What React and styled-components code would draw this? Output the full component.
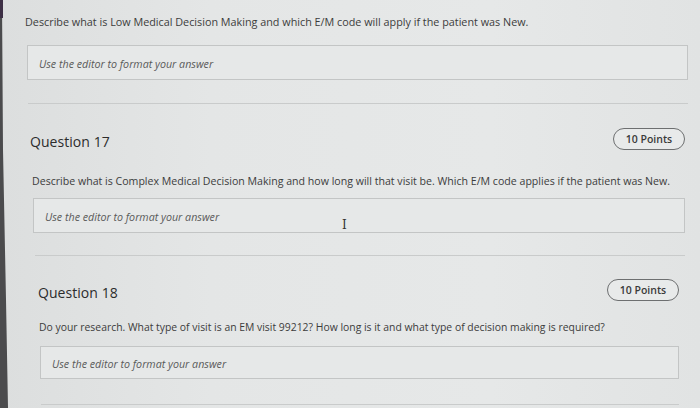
import React from "react";
import styled, { createGlobalStyle } from "styled-components";

const Global = createGlobalStyle`
  html, body { margin: 0; padding: 0; }
  body {
    width: 700px; height: 408px; overflow: hidden;
    background: #e3e5e5;
    font-family: "Open Sans", "Liberation Sans", sans-serif;
    color: #3a3a3a;
  }
`;

const Page = styled.div`
  position: relative;
  width: 700px;
  height: 408px;
  overflow: hidden;
  background: linear-gradient(90deg, #dcdede 0%, #e4e6e6 30%, #e6e8e8 70%, #e1e3e3 100%);
`;

const Bezel = styled.svg`
  position: absolute;
  left: 0;
  top: 0;
  pointer-events: none;
`;

const Section = styled.section`
  margin-left: ${(p) => p.$left}px;
  margin-right: ${(p) => p.$right}px;
  padding-top: ${(p) => p.$top}px;
`;

const HeadRow = styled.div`
  display: flex;
  align-items: center;
  justify-content: space-between;
  height: 24px;
  margin-bottom: ${(p) => p.$gap}px;
`;

const Title = styled.h2`
  margin: 0;
  padding-top: 4px;
  font-size: 14px;
  font-weight: 400;
  color: #2c2c2c;
  letter-spacing: 0.05px;
`;

const Badge = styled.span`
  display: inline-flex;
  align-items: center;
  justify-content: center;
  width: 72px;
  height: 22px;
  box-sizing: border-box;
  border: 1px solid #6d6f70;
  border-radius: 12px;
  font-size: 10.5px;
  font-weight: 600;
  color: #3a3a3a;
  background: #e8eaea;
`;

const Prompt = styled.p`
  margin: 0 0 ${(p) => p.$gap}px 0;
  padding-left: ${(p) => p.$indent}px;
  font-size: ${(p) => p.$size}px;
  line-height: 14px;
  color: #3c3c3c;
  white-space: nowrap;
`;

const AnswerBox = styled.div`
  position: relative;
  margin-left: ${(p) => p.$indent}px;
  height: ${(p) => p.$h}px;
  box-sizing: border-box;
  border: 1px solid #c3c5c5;
  background: #e6e8e8;
  display: flex;
  align-items: center;
  padding-left: 11px;
  padding-top: 2px;
  font-size: 10.7px;
  font-style: italic;
  color: #5a5a5a;
`;

const Cursor = styled.span`
  position: absolute;
  left: ${(p) => p.$x}px;
  top: 19px;
  font-style: normal;
  font-family: "DejaVu Serif", serif;
  font-size: 12px;
  color: #333;
`;

const Divider = styled.hr`
  margin: ${(p) => p.$top}px 0 0 ${(p) => p.$indent}px;
  border: 0;
  border-top: 1px solid #c9cbcb;
  height: 0;
`;

export default function App() {
  return (
    <>
      <Global />
      <Page>
        <Section $left={25} $right={12} $top={15}>
          <Prompt $gap={16} $indent={0} $size={10.8}>
            Describe what is Low Medical Decision Making and which E/M code will apply if the patient was New.
          </Prompt>
          <AnswerBox $indent={2} $h={35}>Use the editor to format your answer</AnswerBox>
          <Divider $indent={3} $top={23} />
        </Section>

        <Section $left={30} $right={15} $top={23}>
          <HeadRow $gap={23}>
            <Title>Question 17</Title>
            <Badge>10 Points</Badge>
          </HeadRow>
          <Prompt $gap={10} $indent={2} $size={10.6}>
            Describe what is Complex Medical Decision Making and how long will that visit be. Which E/M code applies if the patient was New.
          </Prompt>
          <AnswerBox $indent={3} $h={35}>
            Use the editor to format your answer
            <Cursor $x={308}>I</Cursor>
          </AnswerBox>
          <Divider $indent={5} $top={22} />
        </Section>

        <Section $left={38} $right={21} $top={22}>
          <HeadRow $gap={18}>
            <Title>Question 18</Title>
            <Badge>10 Points</Badge>
          </HeadRow>
          <Prompt $gap={12} $indent={1} $size={10.4}>
            Do your research. What type of visit is an EM visit 99212? How long is it and what type of decision making is required?
          </Prompt>
          <AnswerBox $indent={2} $h={33}>Use the editor to format your answer</AnswerBox>
          <Divider $indent={3} $top={25} />
        </Section>

        <Bezel width="12" height="408" viewBox="0 0 12 408">
          <polygon points="0,0 2,0 3,150 6,300 8,408 0,408" fill="#4b4b4d" />
          <rect x="0" y="0" width="3" height="18" fill="#3d2f45" />
        </Bezel>
      </Page>
    </>
  );
}
